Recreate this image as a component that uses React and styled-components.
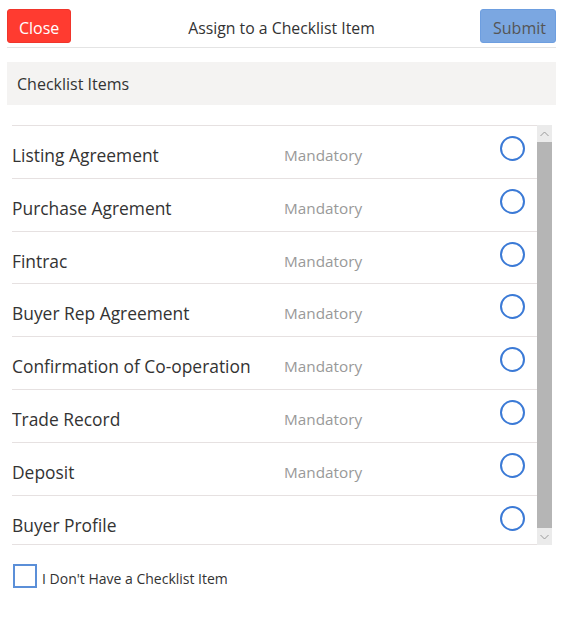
import React, { useState } from 'react'
import styled, { createGlobalStyle } from 'styled-components'

const GlobalStyle = createGlobalStyle`
  html, body {
    margin: 0;
    padding: 0;
    background: #fff;
  }
  body {
    font-family: "Open Sans", Lato, sans-serif;
    color: #333;
  }
  * { box-sizing: border-box; }
`

const items = [
  { name: 'Listing Agreement', mandatory: true },
  { name: 'Purchase Agrement', mandatory: true },
  { name: 'Fintrac', mandatory: true },
  { name: 'Buyer Rep Agreement', mandatory: true },
  { name: 'Confirmation of Co-operation', mandatory: true },
  { name: 'Trade Record', mandatory: true },
  { name: 'Deposit', mandatory: true },
  { name: 'Buyer Profile', mandatory: false },
]

const Chevron = ({ up }) => (
  <svg width="9" height="6" viewBox="0 0 9 6">
    <polyline
      points={up ? '0.5,5 4.5,1 8.5,5' : '0.5,1 4.5,5 8.5,1'}
      fill="none"
      stroke="#9a9a9a"
      strokeWidth="1"
    />
  </svg>
)

const App = () => {
  const [selected, setSelected] = useState(null)
  const [none, setNone] = useState(false)

  return (
    <Wrapper>
      <GlobalStyle />
      <Header>
        <Button variant="close">Close</Button>
        <Title>Assign to a Checklist Item</Title>
        <Button variant="submit" disabled>Submit</Button>
      </Header>

      <SectionBar>Checklist Items</SectionBar>

      <ListFrame>
        <Rows>
          {items.map((item, i) => (
            <Row key={item.name} onClick={() => setSelected(i)}>
              <Name>{item.name}</Name>
              <Tag>{item.mandatory ? 'Mandatory' : ''}</Tag>
              <Radio checked={selected === i} />
            </Row>
          ))}
        </Rows>
        <ScrollBar>
          <ScrollButton><Chevron up /></ScrollButton>
          <Thumb />
          <ScrollButton><Chevron /></ScrollButton>
        </ScrollBar>
      </ListFrame>

      <CheckRow onClick={() => setNone(!none)}>
        <Box checked={none} />
        <CheckLabel>I Don't Have a Checklist Item</CheckLabel>
      </CheckRow>
    </Wrapper>
  )
}

const Wrapper = styled.div`
  padding: 0 5px 0 7px;
  width: 561px;
`

const Header = styled.header`
  height: 48px;
  display: grid;
  grid-template-columns: 1fr auto 1fr;
  align-items: start;
  padding-top: 9px;
  border-bottom: 1px solid #e4e4e4;

  & > :last-child {
    justify-self: end;
  }
`

const Button = styled.button`
  height: 34px;
  border-radius: 3px;
  font-family: inherit;
  font-size: 16px;
  text-align: left;
  overflow: hidden;
  white-space: nowrap;
  cursor: pointer;
  padding-top: 3px;
  padding-bottom: 0;
  ${({ variant }) =>
    variant === 'close'
      ? `
    width: 64px;
    padding-left: 11px;
    padding-right: 0;
    background: #ff3b30;
    border: 1px solid #f0352b;
    color: #fff;
  `
      : `
    width: 76px;
    padding-left: 12px;
    padding-right: 0;
    background: #7ba7e1;
    border: 1px solid #6d9ee0;
    color: #555;
  `}
`

const Title = styled.h1`
  margin: 0;
  font-size: 15.8px;
  font-weight: 400;
  line-height: 38px;
  color: #333;
`

const SectionBar = styled.div`
  margin-top: 14px;
  height: 43px;
  background: #f4f3f2;
  padding-left: 10px;
  display: flex;
  align-items: center;
  font-size: 16px;
  color: #333;
`

const ListFrame = styled.div`
  margin: 20px 4px 0 5px;
  height: 420px;
  display: flex;
`

const Rows = styled.div`
  flex: 1;
  overflow: hidden;
  border-top: 1px solid #e6e1e1;
  border-bottom: 1px solid #e6e1e1;
`

const Row = styled.div`
  height: 52.8px;
  display: grid;
  grid-template-columns: 272px 1fr 25px;
  align-items: start;
  padding-right: 12px;
  border-bottom: 1px solid #e6e1e1;
  cursor: pointer;
`

const Name = styled.span`
  padding-top: 17px;
  font-size: 17.4px;
  line-height: 24px;
  color: #333;
`

const Tag = styled.span`
  padding-top: 17px;
  font-size: 15.3px;
  line-height: 24px;
  color: #999;
`

const Radio = styled.span`
  margin-top: 10px;
  width: 25px;
  height: 25px;
  border-radius: 50%;
  border: 2px solid #3b7ad6;
  background: ${({ checked }) => (checked ? 'radial-gradient(#3b7ad6 45%, #fff 50%)' : '#fff')};
`

const ScrollBar = styled.div`
  width: 15px;
  display: flex;
  flex-direction: column;
  background: #f1f1f1;
`

const ScrollButton = styled.div`
  height: 17px;
  flex: none;
  display: flex;
  align-items: center;
  justify-content: center;
  background: #ebebeb;
`

const Thumb = styled.div`
  flex: 1;
  background: #b5b5b5;
`

const CheckRow = styled.label`
  margin: 18px 0 0 6px;
  display: flex;
  align-items: center;
  gap: 5px;
  cursor: pointer;
`

const Box = styled.span`
  width: 24px;
  height: 24px;
  border: 2px solid #5b8fd8;
  background: ${({ checked }) => (checked ? '#5b8fd8' : '#fff')};
`

const CheckLabel = styled.span`
  padding-top: 6px;
  font-size: 14px;
  color: #333;
`

export default App
